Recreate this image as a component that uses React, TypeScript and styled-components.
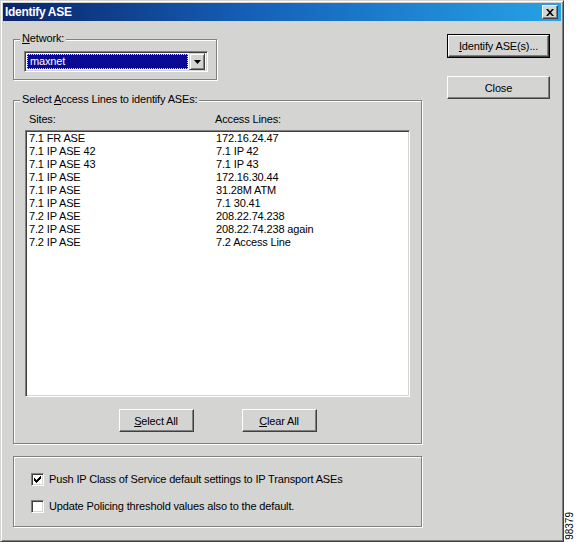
import React from 'react';
import styled, { createGlobalStyle } from 'styled-components';

const face = '#d4d4d2';

const GlobalStyle = createGlobalStyle`
  html, body {
    margin: 0;
    padding: 0;
    background: #fff;
  }
  body {
    font-family: "Liberation Sans", Arial, sans-serif;
    font-size: 11px;
    letter-spacing: -0.15px;
    color: #000;
  }
`;

const Page = styled.div`
  display: flex;
  width: 576px;
  height: 542px;
  background: #fff;
`;

const Window = styled.div`
  width: 564px;
  height: 542px;
  box-sizing: border-box;
  background: ${face};
  border: 1px solid;
  border-color: ${face} #404040 #404040 ${face};
  box-shadow: inset 1px 1px 0 #fff, inset -1px -1px 0 #808080;
  padding: 2px;
  display: flex;
  flex-direction: column;
`;

const TitleBar = styled.div`
  height: 18px;
  display: flex;
  align-items: center;
  justify-content: space-between;
  padding: 0 3px 0 2px;
  background: linear-gradient(90deg, #0a246a 0%, #1561b8 45%, #26a2e6 100%);
`;

const Title = styled.span`
  color: #fff;
  font-weight: bold;
  font-size: 12px;
  letter-spacing: -0.3px;
`;

const TitleClose = styled.div`
  width: 16px;
  height: 14px;
  box-sizing: border-box;
  background: ${face};
  border: 1px solid;
  border-color: #fff #404040 #404040 #fff;
  box-shadow: inset -1px -1px 0 #808080;
  display: flex;
  align-items: center;
  justify-content: center;
`;

const Body = styled.div`
  display: flex;
  padding: 13px 0 0 10px;
`;

const LeftColumn = styled.div`
  display: flex;
  flex-direction: column;
  width: 409px;
`;

const RightColumn = styled.div`
  display: flex;
  flex-direction: column;
  gap: 18px;
  margin-left: 25px;
`;

const Group = styled.div<{ $width: number; $height: number; $top: number }>`
  position: relative;
  box-sizing: border-box;
  width: ${(p) => p.$width}px;
  height: ${(p) => p.$height}px;
  margin-top: ${(p) => p.$top}px;
  border: 1px solid #808080;
  box-shadow: 1px 1px 0 #fff, inset 1px 1px 0 #fff;
`;

const Legend = styled.span`
  position: absolute;
  top: -8px;
  left: 6px;
  line-height: 13px;
  padding: 0 2px;
  background: ${face};
`;

const Combo = styled.div`
  display: flex;
  align-items: center;
  box-sizing: border-box;
  width: 184px;
  height: 21px;
  margin: 11px 0 0 10px;
  background: #fff;
  border: 1px solid;
  border-color: #808080 #fff #fff #808080;
  box-shadow: inset 1px 1px 0 #404040, inset -1px -1px 0 ${face};
  padding: 2px;
  gap: 1px;
`;

const ComboValue = styled.div`
  flex: 1;
  height: 15px;
  line-height: 13px;
  box-sizing: border-box;
  background: #0a0a94;
  color: #fff;
  padding: 0 2px;
  border: 1px dotted #e8e89a;
`;

const DropButton = styled.div`
  width: 16px;
  height: 17px;
  box-sizing: border-box;
  background: ${face};
  border: 1px solid;
  border-color: ${face} #404040 #404040 ${face};
  box-shadow: inset 1px 1px 0 #fff, inset -1px -1px 0 #808080;
  display: flex;
  align-items: center;
  justify-content: center;
`;

const MainInner = styled.div`
  display: flex;
  flex-direction: column;
  padding: 12px 0 0 11px;
`;

const HeaderRow = styled.div`
  display: grid;
  grid-template-columns: 186px 1fr;
  height: 13px;
  line-height: 13px;
  padding-left: 4px;
`;

const ListBox = styled.div`
  box-sizing: border-box;
  width: 385px;
  height: 267px;
  margin-top: 4px;
  background: #fff;
  border: 1px solid;
  border-color: #808080 #fff #fff #808080;
  box-shadow: inset 1px 1px 0 #404040, inset -1px -1px 0 ${face};
  padding: 1px 2px 2px 3px;
`;

const ListRow = styled.div`
  display: grid;
  grid-template-columns: 187px 1fr;
  height: 13px;
  line-height: 13px;
  white-space: nowrap;
`;

const ListButtons = styled.div`
  display: flex;
  justify-content: center;
  gap: 48px;
  width: 385px;
  margin-top: 12px;
`;

const Button = styled.button<{ $width: number; $default?: boolean }>`
  box-sizing: border-box;
  width: ${(p) => p.$width}px;
  height: 23px;
  padding: 0;
  font-family: "Liberation Sans", Arial, sans-serif;
  font-size: 11px;
  letter-spacing: -0.15px;
  color: #000;
  background: ${face};
  border: 1px solid;
  border-color: #fff #404040 #404040 #fff;
  box-shadow: inset -1px -1px 0 #808080, inset 1px 1px 0 ${face};
  ${(p) =>
    p.$default &&
    `outline: 1px solid #000; margin: 1px; width: ${p.$width - 2}px; height: 22px;`}
`;

const OptionsInner = styled.div`
  display: flex;
  flex-direction: column;
  gap: 14px;
  padding: 16px 0 0 17px;
`;

const CheckRow = styled.label`
  display: flex;
  align-items: center;
  gap: 5px;
  height: 13px;
  line-height: 13px;
`;

const CheckBox = styled.span`
  width: 13px;
  height: 13px;
  box-sizing: border-box;
  background: #fff;
  border: 1px solid;
  border-color: #808080 #fff #fff #808080;
  box-shadow: inset 1px 1px 0 #404040, inset -1px -1px 0 ${face};
  display: flex;
  align-items: center;
  justify-content: center;
`;

const SideStrip = styled.div`
  flex: 1;
  display: flex;
  align-items: flex-end;
  justify-content: center;
  padding-bottom: 2px;
`;

const FigureId = styled.span`
  writing-mode: vertical-rl;
  transform: rotate(180deg);
  font-size: 10px;
  line-height: 10px;
  letter-spacing: 0;
  color: #000;
`;

const rows: [string, string][] = [
  ['7.1 FR ASE', '172.16.24.47'],
  ['7.1 IP ASE 42', '7.1 IP 42'],
  ['7.1 IP ASE 43', '7.1 IP 43'],
  ['7.1 IP ASE', '172.16.30.44'],
  ['7.1 IP ASE', '31.28M ATM'],
  ['7.1 IP ASE', '7.1 30.41'],
  ['7.2 IP ASE', '208.22.74.238'],
  ['7.2 IP ASE', '208.22.74.238 again'],
  ['7.2 IP ASE', '7.2 Access Line'],
];

const Check = ({ checked }: { checked?: boolean }) => (
  <CheckBox>
    {checked && (
      <svg width="7" height="7" viewBox="0 0 7 7">
        <path d="M0 2h1v1h1v1h1V3h1V2h1V1h1V0h1v3H6v1H5v1H4v1H3v1H2V6H1V5H0z" fill="#000" />
      </svg>
    )}
  </CheckBox>
);

const App = () => {
  return (
    <Page>
      <GlobalStyle />
      <Window>
        <TitleBar>
          <Title>Identify ASE</Title>
          <TitleClose>
            <svg width="8" height="7" viewBox="0 0 8 7">
              <path d="M0 0h2l2 2.2L6 0h2L5 3.5 8 7H6L4 4.8 2 7H0l3-3.5z" fill="#000" />
            </svg>
          </TitleClose>
        </TitleBar>
        <Body>
          <LeftColumn>
            <Group $width={204} $height={41} $top={5}>
              <Legend>
                <u>N</u>etwork:
              </Legend>
              <Combo>
                <ComboValue>maxnet</ComboValue>
                <DropButton>
                  <svg width="7" height="4" viewBox="0 0 7 4">
                    <path d="M0 0h7L3.5 4z" fill="#000" />
                  </svg>
                </DropButton>
              </Combo>
            </Group>
            <Group $width={409} $height={344} $top={20}>
              <Legend>
                Select <u>A</u>ccess Lines to identify ASEs:
              </Legend>
              <MainInner>
                <HeaderRow>
                  <span>Sites:</span>
                  <span>Access Lines:</span>
                </HeaderRow>
                <ListBox>
                  {rows.map(([site, line], i) => (
                    <ListRow key={i}>
                      <span>{site}</span>
                      <span>{line}</span>
                    </ListRow>
                  ))}
                </ListBox>
                <ListButtons>
                  <Button $width={75}>
                    <u>S</u>elect All
                  </Button>
                  <Button $width={75}>
                    <u>C</u>lear All
                  </Button>
                </ListButtons>
              </MainInner>
            </Group>
            <Group $width={409} $height={71} $top={12}>
              <OptionsInner>
                <CheckRow>
                  <Check checked />
                  <span>Push IP Class of Service default settings to IP Transport ASEs</span>
                </CheckRow>
                <CheckRow>
                  <Check />
                  <span>Update Policing threshold values also to the default.</span>
                </CheckRow>
              </OptionsInner>
            </Group>
          </LeftColumn>
          <RightColumn>
            <Button $width={103} $default>
              <u>I</u>dentify ASE(s)...
            </Button>
            <Button $width={103}>Close</Button>
          </RightColumn>
        </Body>
      </Window>
      <SideStrip>
        <FigureId>98379</FigureId>
      </SideStrip>
    </Page>
  );
};

export default App;
